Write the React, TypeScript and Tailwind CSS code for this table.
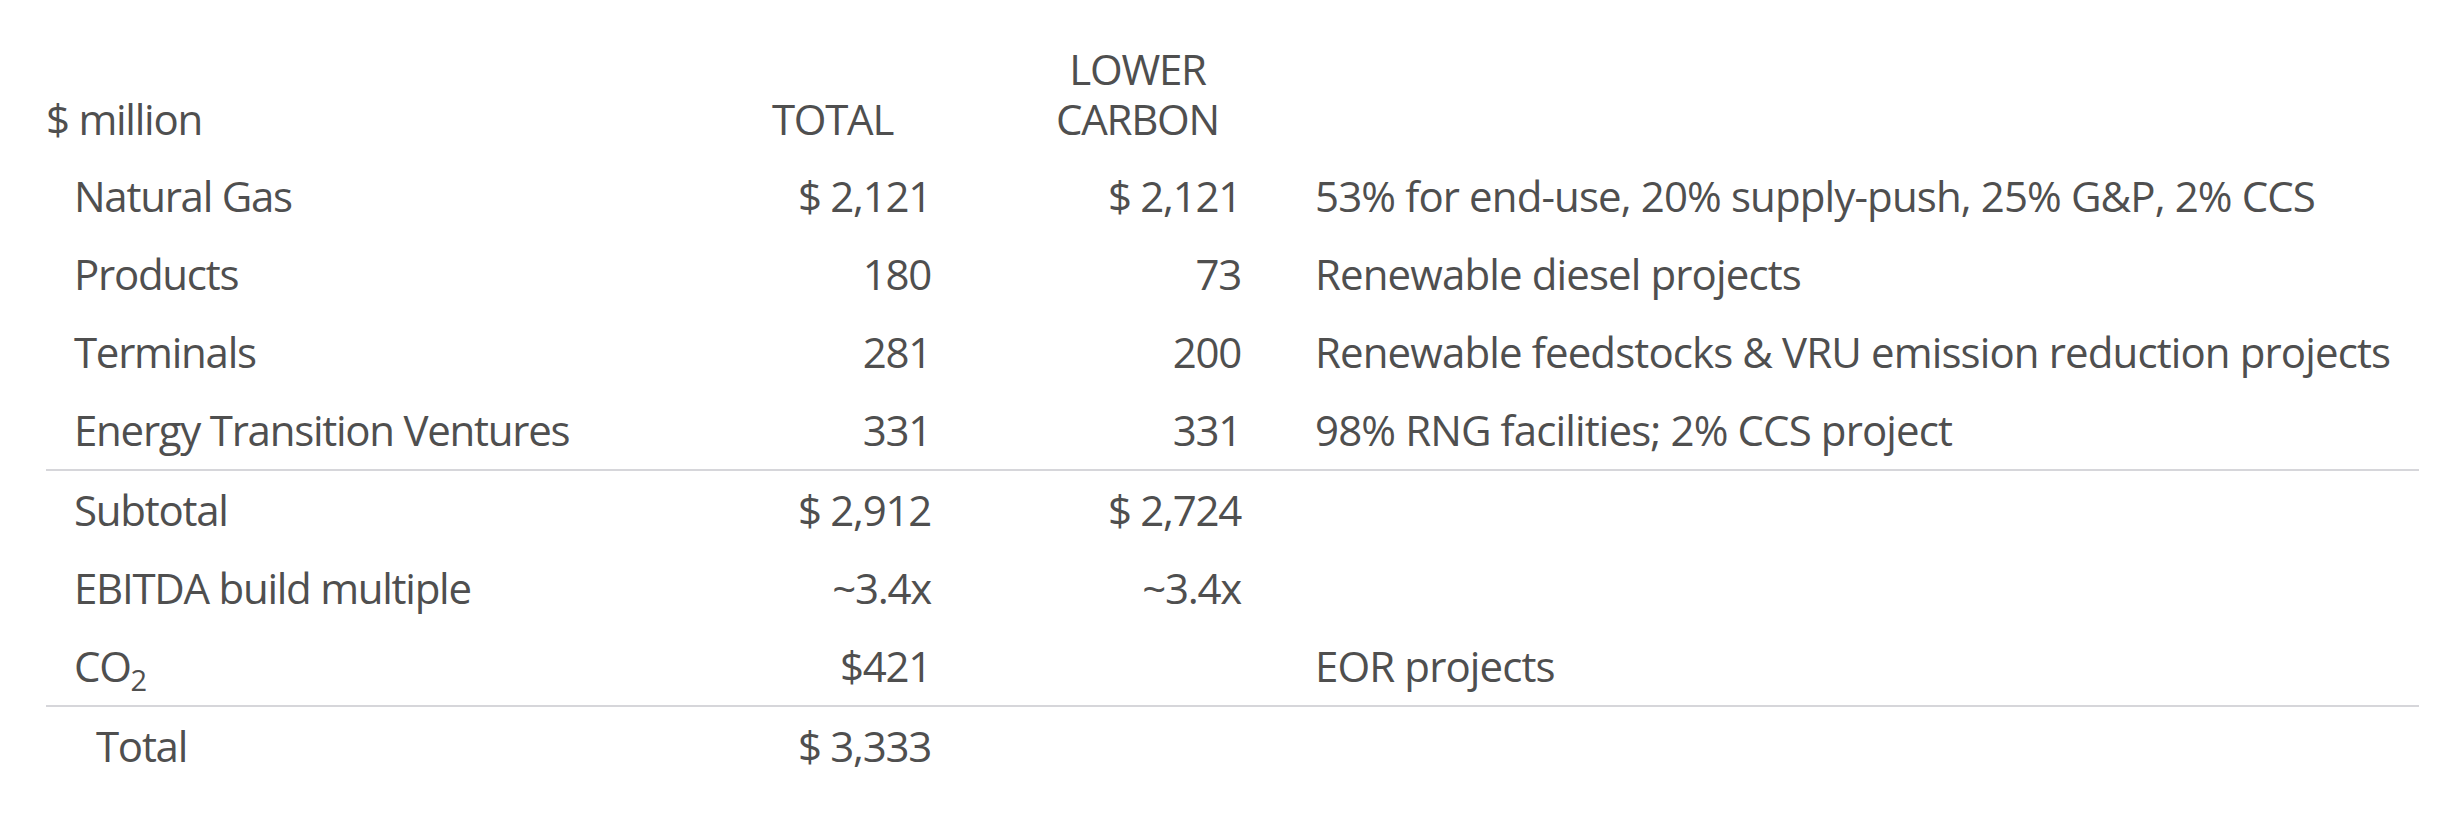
const rows1 = [
  { label: 'Natural Gas', total: '$ 2,121', lower: '$ 2,121', note: '53% for end-use, 20% supply-push, 25% G&P, 2% CCS' },
  { label: 'Products', total: '180', lower: '73', note: 'Renewable diesel projects' },
  { label: 'Terminals', total: '281', lower: '200', note: 'Renewable feedstocks & VRU emission reduction projects' },
  { label: 'Energy Transition Ventures', total: '331', lower: '331', note: '98% RNG facilities; 2% CCS project' },
];

const rows2 = [
  { label: 'Subtotal', total: '$ 2,912', lower: '$ 2,724', note: '' },
  { label: 'EBITDA build multiple', total: '~3.4x', lower: '~3.4x', note: '' },
];

type RowProps = {
  label: React.ReactNode;
  total: string;
  lower?: string;
  note?: string;
  indent?: string;
  border?: boolean;
};

const Row = ({ label, total, lower = '', note = '', indent = 'pl-[28px]', border }: RowProps) => (
  <div
    className={`flex leading-[78px] whitespace-nowrap ${
      border ? 'h-[80px] border-t-2 border-[#d6d6da]' : 'h-[78px]'
    }`}
  >
    <div className={`w-[688px] ${indent}`}>{label}</div>
    <div className="w-[197px] text-right">{total}</div>
    <div className="ml-[103px] w-[207px] text-right">{lower}</div>
    <div className="ml-[74px] tracking-[-0.021em]">{note}</div>
  </div>
);

export default function App() {
  return (
    <div className="min-h-screen bg-white pt-[44px] pl-[46px] pr-[23px] font-['Open_Sans','Noto_Sans',sans-serif] text-[42px] tracking-[-0.03em] text-[#4f4f4f]">
      {/* header */}
      <div className="flex items-end pb-[13px] leading-[50px] whitespace-nowrap">
        <div className="w-[688px]">$ million</div>
        <div className="w-[197px] text-center">TOTAL</div>
        <div className="ml-[103px] w-[207px] text-center">
          LOWER
          <br />
          CARBON
        </div>
      </div>

      {rows1.map((r) => (
        <Row key={r.label} {...r} />
      ))}

      {rows2.map((r, i) => (
        <Row key={r.label} {...r} border={i === 0} />
      ))}

      <Row
        label={
          <>
            CO<sub className="text-[29px] -bottom-[9px]">2</sub>
          </>
        }
        total="$421"
        note="EOR projects"
      />

      <Row label="Total" total="$ 3,333" indent="pl-[50px]" border />
    </div>
  );
}
